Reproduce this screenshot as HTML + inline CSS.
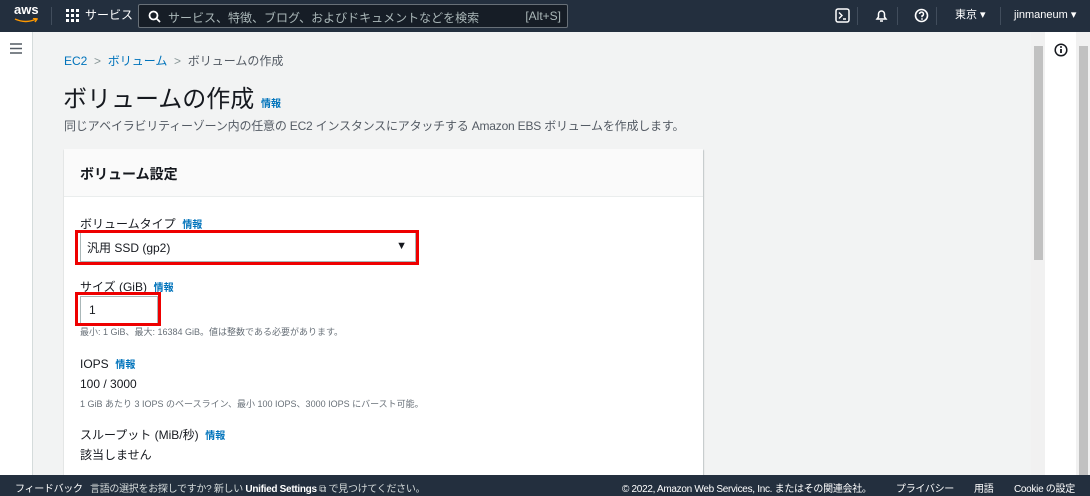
<!DOCTYPE html>
<html><head><meta charset="utf-8"><style>
*{margin:0;padding:0;box-sizing:border-box}
body{width:1090px;height:496px;overflow:hidden;font-family:"Liberation Sans","Noto Sans CJK JP",sans-serif;background:#f2f3f3;position:relative;color:#16191f}
.hdr{position:absolute;left:0;top:0;width:1090px;height:32px;background:#232f3e;color:#fff;font-size:12px}
.hdr .t{position:absolute;top:8px;line-height:14px}
.search{position:absolute;left:138px;top:4px;width:430px;height:24px;border:1px solid #687078;border-radius:2px;background:#161d26;color:#aab7b8;font-size:12px}
.sep{position:absolute;top:7px;width:1px;height:18px;background:#414d5c}
.side{position:absolute;left:0;top:32px;width:33px;height:443px;background:#fff;border-right:1px solid #d5dbdb}
.rp{position:absolute;left:1045px;top:32px;width:31px;height:443px;background:#fff}
.sb{position:absolute;top:32px;width:14px;height:443px;background:#f1f1f1}
.sb i{position:absolute;left:3px;width:9px;background:#c1c1c1}
.crumb{position:absolute;left:64px;top:52px;font-size:12px;color:#545b64}
.blue{color:#0073bb}
h1{position:absolute;left:63px;top:79px;font-size:24px;font-weight:400;color:#16191f}
.info{font-size:10px;color:#0073bb;font-weight:700}
.desc{position:absolute;left:64px;top:117px;font-size:12px;color:#545b64;letter-spacing:-0.2px}
.card{position:absolute;left:64px;top:149px;width:639px;height:330px;background:#fff;box-shadow:0 1px 1px rgba(0,28,36,.3),1px 1px 1px rgba(0,28,36,.15)}
.ch{height:48px;background:#fafafa;border-bottom:1px solid #eaeded;padding:15px 16px;font-size:14px;font-weight:700}
.lab{position:absolute;left:80px;font-size:12px;color:#16191f}
.small{position:absolute;left:80px;font-size:9px;color:#687078}
.red{position:absolute;border:3px solid #e00;}
.ftr{position:absolute;left:0;top:475px;width:1090px;height:21px;background:#232f3e;color:#fff;font-size:10px;letter-spacing:-0.3px}
.ftr span{position:absolute;top:5px;white-space:nowrap}
</style></head><body>
<div class="hdr">
<span class="t" style="left:14px;top:3px;font-weight:700;font-size:13px">aws</span>
<svg style="position:absolute;left:14px;top:18px" width="24" height="6"><path d="M1 1 Q12 6 22 1 M19 0 L23 1 L21 4" stroke="#f90" stroke-width="1.5" fill="none"/></svg>
<div class="sep" style="left:51px"></div>
<svg style="position:absolute;left:66px;top:9px" width="13" height="13" fill="#fff"><rect x="0" y="0" width="3" height="3"/><rect x="5" y="0" width="3" height="3"/><rect x="10" y="0" width="3" height="3"/><rect x="0" y="5" width="3" height="3"/><rect x="5" y="5" width="3" height="3"/><rect x="10" y="5" width="3" height="3"/><rect x="0" y="10" width="3" height="3"/><rect x="5" y="10" width="3" height="3"/><rect x="10" y="10" width="3" height="3"/></svg>
<span class="t" style="left:85px">サービス</span>
<div class="search"><svg style="position:absolute;left:9px;top:5px" width="13" height="13"><circle cx="5.5" cy="5.5" r="4" stroke="#fff" stroke-width="1.8" fill="none"/><path d="M8.5 8.5L12 12" stroke="#fff" stroke-width="1.8"/></svg><span style="position:absolute;left:29px;top:4px">サービス、特徴、ブログ、およびドキュメントなどを検索</span><span style="position:absolute;right:6px;top:4px">[Alt+S]</span></div>
<svg style="position:absolute;left:835px;top:8px" width="15" height="15"><rect x="1" y="1" width="13" height="13" rx="2" stroke="#fff" stroke-width="1.5" fill="none"/><path d="M4 4.5L7 7.5L4 10.5M8 11h3" stroke="#fff" stroke-width="1.4" fill="none"/></svg>
<div class="sep" style="left:857px"></div>
<svg style="position:absolute;left:874px;top:8px" width="15" height="15"><path d="M3 11h9l-1.5-2V6a3 3 0 0 0-6 0v3z M6 13h3" stroke="#fff" stroke-width="1.5" fill="none"/></svg>
<div class="sep" style="left:897px"></div>
<svg style="position:absolute;left:914px;top:8px" width="15" height="15"><circle cx="7.5" cy="7.5" r="6" stroke="#fff" stroke-width="1.6" fill="none"/><path d="M5.5 6a2 2 0 1 1 2.5 2v1.3" stroke="#fff" stroke-width="1.5" fill="none"/><circle cx="8" cy="11" r=".9" fill="#fff"/></svg>
<div class="sep" style="left:936px"></div>
<span class="t" style="left:955px;font-size:11px">東京 ▾</span>
<div class="sep" style="left:1000px"></div>
<span class="t" style="left:1014px;font-size:11px">jinmaneum ▾</span>
</div>
<div class="side"><svg style="position:absolute;left:10px;top:11px" width="13" height="11"><path d="M0 1h12M0 5.5h12M0 10h12" stroke="#545b64" stroke-width="1.5"/></svg></div>
<div class="sb" style="left:1031px"><i style="top:14px;height:214px"></i></div>
<div class="rp"><svg style="position:absolute;left:9px;top:11px" width="14" height="14"><circle cx="7" cy="7" r="5.8" stroke="#16191f" stroke-width="1.5" fill="none"/><path d="M7 6v4" stroke="#16191f" stroke-width="1.8"/><circle cx="7" cy="4" r="1" fill="#16191f"/></svg></div>
<div class="sb" style="left:1076px"><i style="top:14px;height:430px"></i></div>
<div class="crumb"><span class="blue">EC2</span> &nbsp;<span style="color:#879596">&gt;</span>&nbsp; <span class="blue">ボリューム</span> &nbsp;<span style="color:#879596">&gt;</span>&nbsp; ボリュームの作成</div>
<h1>ボリュームの作成 <span class="info">情報</span></h1>
<div class="desc">同じアベイラビリティーゾーン内の任意の EC2 インスタンスにアタッチする Amazon EBS ボリュームを作成します。</div>
<div class="card"><div class="ch">ボリューム設定</div></div>
<div class="lab" style="top:215px">ボリュームタイプ &nbsp;<span class="info">情報</span></div>
<div style="position:absolute;left:80px;top:232px;width:336px;height:30px;border:1px solid #aab7b8;background:#fff;font-size:12px;padding:6px 6px">汎用 SSD (gp2)<span style="position:absolute;right:8px;top:7px;font-size:11px;color:#16191f">▼</span></div>
<div class="red" style="left:75px;top:230px;width:344px;height:35px"></div>
<div class="lab" style="top:278px">サイズ (GiB) &nbsp;<span class="info">情報</span></div>
<div style="position:absolute;left:80px;top:296px;width:78px;height:28px;border:1px solid #aab7b8;background:#fff;font-size:12px;padding:6px 8px">1</div>
<div class="red" style="left:75px;top:292px;width:86px;height:34px"></div>
<div class="small" style="top:325px">最小: 1 GiB、最大: 16384 GiB。値は整数である必要があります。</div>
<div class="lab" style="top:356px">IOPS &nbsp;<span class="info">情報</span></div>
<div class="lab" style="top:377px">100 / 3000</div>
<div class="small" style="top:397px">1 GiB あたり 3 IOPS のベースライン、最小 100 IOPS、3000 IOPS にバースト可能。</div>
<div class="lab" style="top:426px">スループット (MiB/秒) &nbsp;<span class="info">情報</span></div>
<div class="lab" style="top:446px">該当しません</div>
<div class="ftr">
<span style="left:15px">フィードバック</span>
<span style="left:90px;color:#d5dbdb">言語の選択をお探しですか? 新しい <b style="color:#fff">Unified Settings</b> ⧉ で見つけてください。</span>
<span style="left:622px">© 2022, Amazon Web Services, Inc. またはその関連会社。</span>
<span style="left:896px">プライバシー</span>
<span style="left:974px">用語</span>
<span style="left:1014px">Cookie の設定</span>
</div>
</body></html>
